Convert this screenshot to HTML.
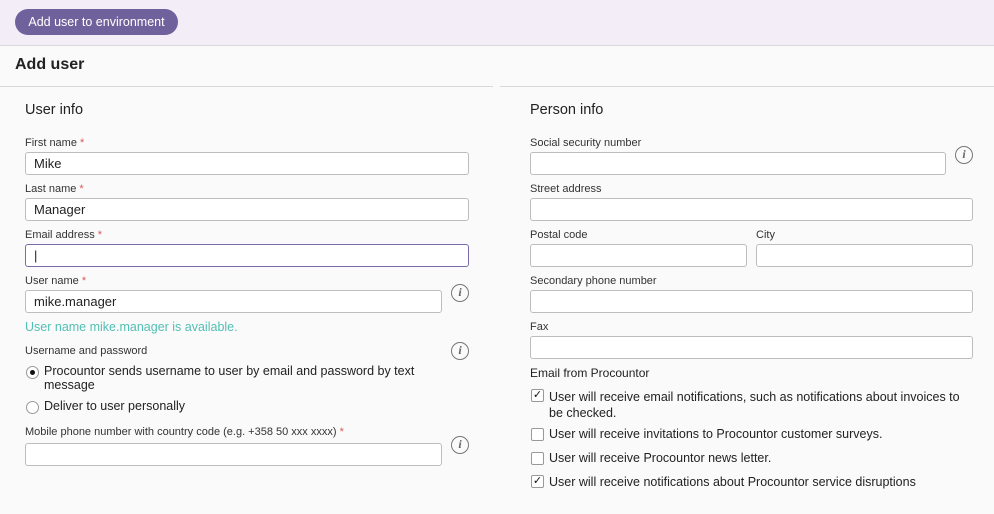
<!DOCTYPE html>
<html><head><style>
*{box-sizing:border-box;margin:0;padding:0}
body{width:994px;height:514px;background:#fafafa;font-family:"Liberation Sans",sans-serif;color:#222;position:relative;overflow:hidden}
.a{position:absolute;white-space:nowrap}
.hdr{position:absolute;left:0;top:0;width:994px;height:46px;background:#f3edf7;border-bottom:1px solid #d9d9d9}
.btn{position:absolute;left:15px;top:9px;width:163px;height:26px;border-radius:13px;background:#6f629c;color:#fff;font-size:12.5px;line-height:26px;text-align:center}
.lbl{font-size:11px;color:#333}
.req{color:#e05555}
.in{position:absolute;height:23px;border:1px solid #bdbdbd;border-radius:3px;background:#fff;font-size:13px;line-height:21px;padding-left:8px}
.h2{font-size:14.5px;color:#222}
.info{position:absolute;width:18px;height:18px;border:1.5px solid #777;border-radius:50%;font:italic bold 12px "Liberation Serif",serif;color:#666;text-align:center;line-height:15px}
.cb{position:absolute;width:13px;height:13px;border:1px solid #999;border-radius:2px;background:#fff;font-size:11px;line-height:11px;text-align:center;color:#111}
.t{font-size:12.5px;color:#222}
.rad{position:absolute;width:13px;height:13px;border:1px solid #999;border-radius:50%;background:#fff}
</style></head><body>
<div class="hdr"><div class="btn">Add user to environment</div></div>
<div class="a" style="left:15px;top:56px;font-size:16px;font-weight:bold;color:#222">Add user</div>
<div class="a" style="left:0;top:86px;width:493px;height:1px;background:#d9d9d9"></div>
<div class="a" style="left:500px;top:86px;width:494px;height:1px;background:#d9d9d9"></div>

<div class="a h2" style="left:25px;top:102px">User info</div>
<div class="a lbl" style="left:25px;top:137px">First name <span class="req">*</span></div>
<div class="in" style="left:25px;top:152px;width:444px">Mike</div>
<div class="a lbl" style="left:25px;top:183px">Last name <span class="req">*</span></div>
<div class="in" style="left:25px;top:198px;width:444px">Manager</div>
<div class="a lbl" style="left:25px;top:229px">Email address <span class="req">*</span></div>
<div class="in" style="left:25px;top:244px;width:444px;border-color:#7a6aa8">|</div>
<div class="a lbl" style="left:25px;top:275px">User name <span class="req">*</span></div>
<div class="in" style="left:25px;top:290px;width:417px">mike.manager</div>
<div class="info" style="left:451px;top:284px">i</div>
<div class="a" style="left:25px;top:320px;font-size:12.5px;color:#52bfb5">User name mike.manager is available.</div>
<div class="a lbl" style="left:25px;top:345px">Username and password</div>
<div class="info" style="left:451px;top:342px">i</div>
<div class="rad" style="left:26px;top:366px"><div style="position:absolute;left:3px;top:3px;width:5px;height:5px;border-radius:50%;background:#111"></div></div>
<div class="a t" style="left:44px;top:364px;line-height:14px">Procountor sends username to user by email and password by text<br>message</div>
<div class="rad" style="left:26px;top:401px"></div>
<div class="a t" style="left:44px;top:399px">Deliver to user personally</div>
<div class="a lbl" style="left:25px;top:426px">Mobile phone number with country code (e.g. +358 50 xxx xxxx) <span class="req">*</span></div>
<div class="in" style="left:25px;top:443px;width:417px"></div>
<div class="info" style="left:451px;top:436px">i</div>

<div class="a h2" style="left:530px;top:102px">Person info</div>
<div class="a lbl" style="left:530px;top:137px">Social security number</div>
<div class="in" style="left:530px;top:152px;width:416px"></div>
<div class="info" style="left:955px;top:146px">i</div>
<div class="a lbl" style="left:530px;top:183px">Street address</div>
<div class="in" style="left:530px;top:198px;width:443px"></div>
<div class="a lbl" style="left:530px;top:229px">Postal code</div>
<div class="in" style="left:530px;top:244px;width:217px"></div>
<div class="a lbl" style="left:756px;top:229px">City</div>
<div class="in" style="left:756px;top:244px;width:217px"></div>
<div class="a lbl" style="left:530px;top:275px">Secondary phone number</div>
<div class="in" style="left:530px;top:290px;width:443px"></div>
<div class="a lbl" style="left:530px;top:321px">Fax</div>
<div class="in" style="left:530px;top:336px;width:443px"></div>
<div class="a" style="left:530px;top:366px;font-size:12px">Email from Procountor</div>
<div class="cb" style="left:531px;top:389px">✓</div>
<div class="a t" style="left:549px;top:389px;line-height:16px">User will receive email notifications, such as notifications about invoices to<br>be checked.</div>
<div class="cb" style="left:531px;top:428px"></div>
<div class="a t" style="left:549px;top:427px">User will receive invitations to Procountor customer surveys.</div>
<div class="cb" style="left:531px;top:452px"></div>
<div class="a t" style="left:549px;top:451px">User will receive Procountor news letter.</div>
<div class="cb" style="left:531px;top:475px">✓</div>
<div class="a t" style="left:549px;top:475px">User will receive notifications about Procountor service disruptions</div>
</body></html>
